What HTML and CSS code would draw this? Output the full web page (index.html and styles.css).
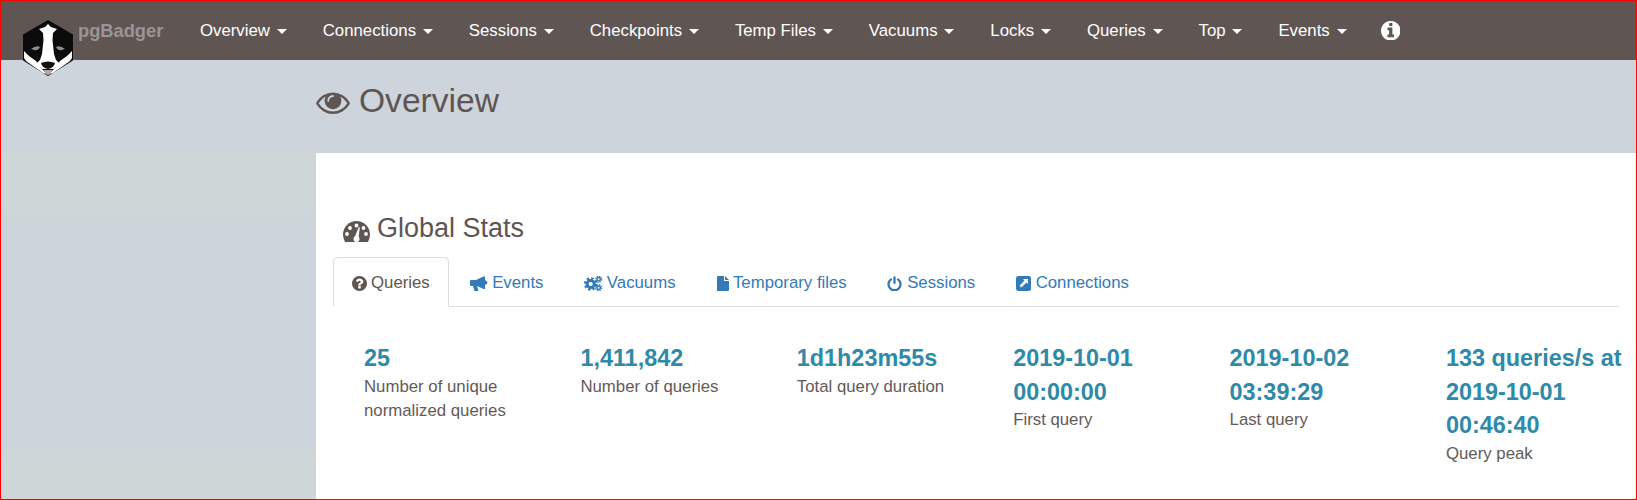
FILE: index.html
```html
<!DOCTYPE html>
<html lang="en">
<head>
<meta charset="utf-8">
<title>pgBadger</title>
<link rel="stylesheet" href="styles.css">
</head>
<body>
<div class="frame">
  <nav class="navbar">
    <a class="brand">pgBadger</a>
    <ul class="menu">
      <li>Overview<i class="caret"></i></li>
      <li>Connections<i class="caret"></i></li>
      <li>Sessions<i class="caret"></i></li>
      <li>Checkpoints<i class="caret"></i></li>
      <li>Temp Files<i class="caret"></i></li>
      <li>Vacuums<i class="caret"></i></li>
      <li>Locks<i class="caret"></i></li>
      <li>Queries<i class="caret"></i></li>
      <li>Top<i class="caret"></i></li>
      <li>Events<i class="caret"></i></li>
      <li class="info"><svg class="icon-info" viewBox="128 128 1536 1536"><path fill="#fff" fill-rule="evenodd" d="M1152 1376v-160q0-14-9-23t-23-9h-96v-512q0-14-9-23t-23-9h-320q-14 0-23 9t-9 23v160q0 14 9 23t23 9h96v320h-96q-14 0-23 9t-9 23v160q0 14 9 23t23 9h448q14 0 23-9t9-23zm-128-896v-160q0-14-9-23t-23-9h-192q-14 0-23 9t-9 23v160q0 14 9 23t23 9h192q14 0 23-9t9-23zm640 416q0 209-103 385.5t-279.5 279.5-385.500 103-385.500-103-279.500-279.500-103-385.500 103-385.500 279.500-279.500 385.500-103 385.500 103 279.500 279.500 103 385.500z"/></svg></li>
    </ul>
  </nav>
  <svg class="logo" viewBox="0 0 50 56">
    <path fill="#0b0b0b" stroke="#0b0b0b" stroke-width="2" stroke-linejoin="round" d="M25 1 L49 15 V40 L25 55 L1 40 V15 Z"/>
    <path fill="#fff" d="M25 4 L28 7 L34 9 L30 13 L29.500 20 L31 34 L33 40 L37 44 L31 49 L19 49 L13 44 L17 40 L19 34 L20.500 20 L20 13 L16 9 L22 7 Z"/>
    <path fill="#fff" d="M1 31 L6 36 L13 41 L19 49 L24 54 L20 53 L3 41 L1 38 Z"/>
    <path fill="#fff" d="M49 31 L44 36 L37 41 L31 49 L26 54 L30 53 L47 41 L49 38 Z"/>
    <path fill="#8e8e8e" d="M8 29 Q13 25 17 27 Q15 32 8 29 Z"/>
    <path fill="#8e8e8e" d="M42 29 Q37 25 33 27 Q35 32 42 29 Z"/>
    <path fill="#111" d="M18 43 Q25 40 32 43 Q31 48 25 49 Q19 48 18 43 Z"/>
    <path fill="#b0a8a6" d="M20 50 L30 50 L26 55 L24 55 Z"/>
  </svg>
  <div class="layout">
    <header class="page-head">
      <svg class="icon-eye" viewBox="0 256 1792 1280"><path fill="#5f5553" fill-rule="evenodd" d="M1664 960q-152-236-381-353 61 104 61 225 0 185-131.500 316.500t-316.500 131.500-316.500-131.500-131.500-316.500q0-121 61-225-229 117-381 353 133 205 333.500 326.500t434.500 121.500 434.500-121.500 333.500-326.500zm-720-384q0-20-14-34t-34-14q-125 0-214.500 89.500t-89.500 214.500q0 20 14 34t34 14 34-14 14-34q0-86 61-147t147-61q20 0 34-14t14-34zm848 384q0 34-20 69-140 230-376.500 368.500t-499.500 138.500-499.500-139-376.500-368q-20-35-20-69t20-69q140-229 376.500-368t499.500-139 499.500 139 376.500 368q20 35 20 69z"/></svg>
      <h1>Overview</h1>
    </header>
    <section class="panel">
      <h2 class="section-title">
        <svg class="icon-gauge" viewBox="0 0 27 21">
          <path fill="#5f5553" d="M2 21 Q0 17 0 13.500 A13.500 13.500 0 0 1 27 13.500 Q27 17 25 21 Z"/>
          <g fill="#fff">
            <circle cx="13.500" cy="4.500" r="1.900"/>
            <circle cx="7" cy="7" r="1.900"/>
            <circle cx="20.500" cy="7" r="1.900"/>
            <circle cx="4" cy="13" r="1.900"/>
            <circle cx="23" cy="13" r="1.900"/>
            <circle cx="13.500" cy="18" r="3"/>
            <path d="M11.500 16.500 L15.800 6 L16.800 6.300 L15.500 17.500 Z"/>
          </g>
        </svg>
        Global Stats
      </h2>
      <ul class="tabs">
        <li class="tab active"><svg class="ti" viewBox="128 128 1536 1536"><path fill="#5f5553" fill-rule="evenodd" d="M1024 1376v-192q0-14-9-23t-23-9h-192q-14 0-23 9t-9 23v192q0 14 9 23t23 9h192q14 0 23-9t9-23zm256-672q0-88-55.500-163t-138.500-116-170-41q-243 0-371 213-15 24 8 42l132 100q7 6 19 6 16 0 25-12 53-68 86-92 34-24 86-24 48 0 85.500 26t37.500 59q0 38-20 61t-68 45q-63 28-115.500 86.500t-52.500 125.500v36q0 14 9 23t23 9h192q14 0 23-9t9-23q0-19 21.500-49.500t54.500-49.500q32-18 49-28.500t46-35 44.500-48 28-60.500 12.500-81zm384 192q0 209-103 385.500t-279.500 279.500-385.500 103-385.500-103-279.500-279.500-103-385.500 103-385.500 279.500-279.500 385.500-103 385.500 103 279.500 279.500 103 385.500z"/></svg>Queries</li>
        <li class="tab"><svg class="ti wide" viewBox="0 0 18 15"><path fill="#337ab7" d="M0 4.500 Q0 4 1 4 H6 L13.500 0.500 H15 V4 Q17.500 5 17.500 6.500 Q17.500 8 15 9 V13 H13.500 L7 10 L8.500 14.500 Q8 15 6 15 H4.500 L3 10 H1 Q0 10 0 9 Z"/></svg>Events</li>
        <li class="tab"><svg class="ti cogs" viewBox="0 0 19 16"><g fill="none" stroke="#337ab7"><circle cx="6.500" cy="8.500" r="3.800" stroke-width="3.200"/><circle cx="6.500" cy="8.500" r="5.900" stroke-width="2.600" stroke-dasharray="2.500 2.100"/><circle cx="15" cy="3.500" r="1.800" stroke-width="1.600"/><circle cx="15" cy="3.500" r="3.200" stroke-width="1.400" stroke-dasharray="1.500 1"/><circle cx="15" cy="12.500" r="1.800" stroke-width="1.600"/><circle cx="15" cy="12.500" r="3.200" stroke-width="1.400" stroke-dasharray="1.500 1"/></g></svg>Vacuums</li>
        <li class="tab"><svg class="ti file" viewBox="0 0 12 15"><path fill="#337ab7" d="M0 1 Q0 0 1 0 H7 V5 H12 V14 Q12 15 11 15 H1 Q0 15 0 14 Z M8 0 L12 4 H8 Z"/></svg>Temporary files</li>
        <li class="tab"><svg class="ti" viewBox="0 0 15 15"><path fill="none" stroke="#337ab7" stroke-width="2.300" stroke-linecap="round" d="M4 3.400 A6 6 0 1 0 11 3.400 M7.500 1.300 V7"/></svg>Sessions</li>
        <li class="tab"><svg class="ti" viewBox="0 0 15 15"><path fill="#337ab7" fill-rule="evenodd" d="M2.500 0 H12.500 Q15 0 15 2.500 V12.500 Q15 15 12.500 15 H2.500 Q0 15 0 12.500 V2.500 Q0 0 2.500 0 Z M7 3 L8.500 4.500 L3.500 9.700 L5.300 11.500 L10.500 6.500 L12 8 V3 Z"/></svg>Connections</li>
      </ul>
      <div class="stats">
        <div class="stat"><strong>25</strong><span>Number of unique normalized queries</span></div>
        <div class="stat"><strong>1,411,842</strong><span>Number of queries</span></div>
        <div class="stat"><strong>1d1h23m55s</strong><span>Total query duration</span></div>
        <div class="stat"><strong>2019-10-01 00:00:00</strong><span>First query</span></div>
        <div class="stat"><strong>2019-10-02 03:39:29</strong><span>Last query</span></div>
        <div class="stat"><strong>133 queries/s at 2019-10-01 00:46:40</strong><span>Query peak</span></div>
      </div>
    </section>
  </div>
</div>
</body>
</html>
```
FILE: styles.css
```css
* { box-sizing: border-box; }
html, body { margin: 0; height: 100%; }
body {
  font-family: "Liberation Sans", Arial, sans-serif;
  font-size: 16.8px;
  color: #5f5553;
  background: #fff;
}
.frame {
  position: relative;
  width: 1637px;
  height: 500px;
  border: 1px solid #f00;
  overflow: hidden;
  background: linear-gradient(180deg, #cdd4dc 0, #cdd4dc 146px, #ced6d8 150px, #ced6d8 205px, #cdd4dc 235px, #cdd4dc 446px, #ced6d8 452px, #ced6d8 100%);
  display: flex;
  flex-direction: column;
}
.navbar {
  flex: none;
  height: 59px;
  background: #5f5553;
  display: flex;
  align-items: center;
  color: #fff;
}
.brand {
  width: 181px;
  padding-left: 77px;
  font-weight: 700;
  font-size: 18.3px;
  color: #9a9596;
}
.menu {
  list-style: none;
  display: flex;
  margin: 0;
  padding: 0;
}
.menu li {
  padding: 0 18px;
  white-space: nowrap;
  display: flex;
  align-items: center;
}
.caret {
  display: inline-block;
  margin-left: 6.800px;
  margin-top: 2px;
  border-top: 5px solid #fff;
  border-left: 5px solid transparent;
  border-right: 5px solid transparent;
}
.menu .info { margin-left: -2px; }
.icon-info { width: 19.500px; height: 19.500px; }
.logo {
  position: absolute;
  left: 22px;
  top: 19px;
  width: 50px;
  height: 56px;
}
.layout { flex: 1; display: flex; flex-direction: column; min-height: 0; padding-left: 315px; }
.page-head {
  flex: none;
  height: 93px;
  display: flex;
  align-items: center;
  gap: 9px;
  padding-bottom: 11px;
}
.icon-eye { width: 34px; height: 24px; margin-top: 2px; }
h1 {
  margin: 0;
  font-weight: 400;
  font-size: 33.600px;
  line-height: 1.1;
}
.panel { flex: 1; background: #fff; padding-left: 17px; min-height: 0; }
.section-title {
  margin: 0;
  padding: 48px 0 0 10px;
  height: 104px;
  display: flex;
  align-items: center;
  gap: 7px;
  font-weight: 400;
  font-size: 27px;
  line-height: 1.1;
}
.icon-gauge { width: 27px; height: 21px; margin-top: 5px; }
.tabs {
  list-style: none;
  margin: 0;
  padding: 0;
  width: 1286px;
  display: flex;
  border-bottom: 1px solid #ddd;
  height: 50px;
  color: #337ab7;
}
.tab {
  height: 50px;
  padding: 2px 18px 0;
  margin-right: 2.400px;
  display: flex;
  align-items: center;
  border: 1px solid transparent;
  white-space: nowrap;
}
.tab.active {
  color: #5f5553;
  background: #fff;
  border-color: #ddd #ddd #fff;
  border-radius: 5px 5px 0 0;
}
.ti { width: 15px; height: 15px; margin-right: 5px; flex: none; margin-top: 1px; }
.tab.active .ti { margin-right: 4px; }
.ti.wide { width: 18px; margin-right: 4px; }
.ti.cogs { width: 19px; margin-right: 4px; }
.ti.file { width: 12px; margin-left: 1px; margin-right: 4px; }
.stats {
  display: flex;
  margin-top: 35px;
  padding-left: 13px;
}
.stat {
  flex: none;
  width: 216.400px;
  padding: 0 18px;
}
.stat strong {
  display: block;
  font-size: 23.400px;
  line-height: 33.600px;
  color: #2e8aa8;
}
.stat span { display: block; line-height: 24.500px; margin-top: -1px; color: #635a58; }
```
